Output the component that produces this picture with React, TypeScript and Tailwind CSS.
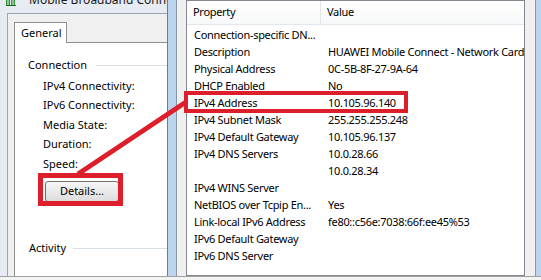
import React from 'react';

const rows: [string, string][] = [
  ['Connection-specific DN...', ''],
  ['Description', 'HUAWEI Mobile Connect - Network Card'],
  ['Physical Address', '0C-5B-8F-27-9A-64'],
  ['DHCP Enabled', 'No'],
  ['IPv4 Address', '10.105.96.140'],
  ['IPv4 Subnet Mask', '255.255.255.248'],
  ['IPv4 Default Gateway', '10.105.96.137'],
  ['IPv4 DNS Servers', '10.0.28.66'],
  ['', '10.0.28.34'],
  ['IPv4 WINS Server', ''],
  ['NetBIOS over Tcpip En...', 'Yes'],
  ['Link-local IPv6 Address', 'fe80::c56e:7038:66f:ee45%53'],
  ['IPv6 Default Gateway', ''],
  ['IPv6 DNS Server', ''],
];

const labels = ['IPv4 Connectivity:', 'IPv6 Connectivity:', 'Media State:', 'Duration:', 'Speed:'];

function SignalIcon() {
  return (
    <svg width="10" height="6" viewBox="0 0 10 6" className="shrink-0">
      <rect x="0" y="0" width="1.5" height="6" fill="#2f9e3a" />
      <rect x="2.5" y="0" width="1.5" height="6" fill="#2f9e3a" />
      <rect x="5" y="0" width="1.5" height="6" fill="#2f9e3a" />
      <rect x="7.5" y="0" width="1.5" height="6" fill="#2f9e3a" />
      <rect x="0" y="5" width="10" height="1" fill="#1d6b25" />
    </svg>
  );
}

function StatusDialog() {
  return (
    <div className="w-[167px] shrink-0 flex flex-col bg-[#e6ecf2] overflow-hidden">
      {/* Title bar (cut off at the top) */}
      <div className="h-[13px] flex items-start gap-[13px] pl-[6px] overflow-hidden">
        <SignalIcon />
        <span className="text-[12px] leading-[12px] -mt-[6px] text-[#1a1a1a] whitespace-nowrap">
          Mobile Broadband Conne
        </span>
      </div>

      {/* Client area */}
      <div className="flex-1 ml-[7px] border-l border-t border-[#9aa5b1] bg-[#f0f0f0] pl-[6px] pt-[8px] flex flex-col">
        <div className="w-[53px] h-[21px] border border-b-0 border-[#8e8f8f] bg-white flex items-center pl-[6px] -mb-px relative z-10">
          General
        </div>
        <div className="flex-1 border-l border-t border-[#8e8f8f] bg-white flex flex-col pt-[14px]">
          <div className="flex items-center pl-[13px] h-[16px]">
            <span>Connection</span>
            <div className="flex-1 ml-[9px] h-px bg-[#d5dfe5]" />
          </div>
          <div className="flex flex-col pl-[28px] pt-[3px]">
            {labels.map((l) => (
              <div key={l} className="h-[19.5px] flex items-center">
                {l}
              </div>
            ))}
          </div>
          <div className="pl-[30px] pt-[7px]">
            <div className="w-[74px] h-[21px] rounded-[3px] border border-[#707070] bg-gradient-to-b from-[#f6f6f6] to-[#dddddd] flex items-center justify-center">
              Details...
            </div>
          </div>
          <div className="flex items-center pl-[14px] mt-[39px] h-[16px]">
            <span>Activity</span>
            <div className="flex-1 ml-[7px] h-px bg-[#d5dfe5]" />
          </div>
        </div>
      </div>
    </div>
  );
}

function DetailsWindow() {
  return (
    <div className="flex-1 flex">
      <div className="w-px bg-[#6f7c8a]" />
      <div className="w-[8px] bg-[#bcd5ee]" />
      <div className="w-px bg-[#8796a6]" />
      <div className="w-[9px] bg-[#f0f0f0]" />
      <div className="w-[339px] border border-[#828790] bg-white flex flex-col tracking-[-0.3px]">
        <div className="h-[24px] flex border-b border-[#e3e6ea] bg-gradient-to-b from-white to-[#f7f8f9]">
          <div className="w-[134px] pl-[6px] flex items-center border-r border-[#e3e6ea]">Property</div>
          <div className="pl-[6px] flex items-center">Value</div>
        </div>
        <div className="flex flex-col pt-[2px]">
          {rows.map(([p, v], i) => (
            <div key={i} className="h-[17px] flex items-center whitespace-nowrap">
              <div className="w-[141px] shrink-0 pl-[7px]">{p}</div>
              <div>{v}</div>
            </div>
          ))}
        </div>
      </div>
      <div className="w-[10px] bg-[#f0f0f0]" />
      <div className="w-px bg-[#8796a6]" />
      <div className="flex-1 bg-[#bcd5ee]" />
    </div>
  );
}

export default function App() {
  return (
    <div className="w-[541px] h-[280px] relative overflow-hidden bg-[#f3f3f3] text-[11px] text-black font-['Noto_Sans',sans-serif]">
      <div className="flex h-[277px] border-b border-[#a0a0a0]">
        <StatusDialog />
        <DetailsWindow />
      </div>

      {/* Red annotation */}
      <div className="absolute left-[38px] top-[173px] w-[85px] h-[33px] border-[5px] border-[#dc1f2b]" />
      <div className="absolute left-[184px] top-[91px] w-[224px] h-[22px] border-[4px] border-[#dc1f2b]" />
      <svg className="absolute inset-0 pointer-events-none" width="541" height="280">
        <line x1="78" y1="174" x2="186" y2="102" stroke="#dc1f2b" strokeWidth="5" />
      </svg>
    </div>
  );
}
